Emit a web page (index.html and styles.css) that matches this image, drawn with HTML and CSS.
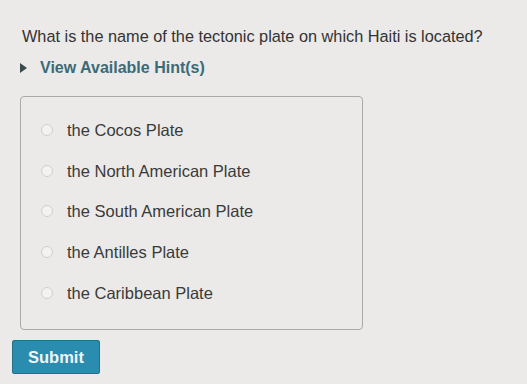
FILE: index.html
```html
<!DOCTYPE html>
<html>
<head>
<meta charset="utf-8">
<link rel="stylesheet" href="styles.css">
</head>
<body>
<div class="page">
  <p class="question">What is the name of the tectonic plate on which Haiti is located?</p>
  <div class="hint"><span class="caret"></span><span class="hint-text">View Available Hint(s)</span></div>
  <div class="box">
    <label class="opt"><span class="radio"></span><span>the Cocos Plate</span></label>
    <label class="opt"><span class="radio"></span><span>the North American Plate</span></label>
    <label class="opt"><span class="radio"></span><span>the South American Plate</span></label>
    <label class="opt"><span class="radio"></span><span>the Antilles Plate</span></label>
    <label class="opt"><span class="radio"></span><span>the Caribbean Plate</span></label>
  </div>
  <button class="submit">Submit</button>
</div>
</body>
</html>
```
FILE: styles.css
```css
html, body {
  margin: 0;
  padding: 0;
  background: #ebeae8;
}
body {
  width: 527px;
  height: 384px;
  overflow: hidden;
  font-family: "Liberation Sans", Arial, sans-serif;
  color: #333;
}
.page {
  padding: 26px 0 0 22px;
  display: flex;
  flex-direction: column;
  align-items: flex-start;
}
.question {
  margin: 0;
  font-size: 16.3px;
  line-height: 20px;
  color: #333;
}
.hint {
  display: flex;
  align-items: center;
  margin-top: 12px;
  margin-left: -2px;
  gap: 13px;
}
.caret {
  width: 0;
  height: 0;
  border-top: 5px solid transparent;
  border-bottom: 5px solid transparent;
  border-left: 7px solid #3c4a50;
}
.hint-text {
  font-weight: bold;
  font-size: 16px;
  line-height: 20px;
  color: #3b6b78;
}
.box {
  margin-top: 18px;
  margin-left: -2px;
  width: 343px;
  height: 234px;
  border: 1px solid #a9a9a6;
  border-radius: 4px;
  box-sizing: border-box;
  padding: 23px 0 0 20px;
  display: flex;
  flex-direction: column;
  gap: 20.7px;
}
.opt {
  display: flex;
  align-items: center;
  gap: 14px;
  font-size: 16.5px;
  line-height: 20px;
  color: #3a3a3a;
}
.radio {
  width: 12px;
  height: 12px;
  border-radius: 50%;
  border: 1px solid #cfcfcc;
  background: #f2f2f0;
  box-sizing: border-box;
}
.submit {
  margin-top: 10px;
  margin-left: -10px;
  width: 88px;
  height: 34px;
  border: 1px solid #22708a;
  border-radius: 2px;
  background: #2a8caf;
  color: #eef6f8;
  font-family: "Liberation Sans", Arial, sans-serif;
  font-weight: bold;
  font-size: 16.5px;
  padding: 0;
}
```
